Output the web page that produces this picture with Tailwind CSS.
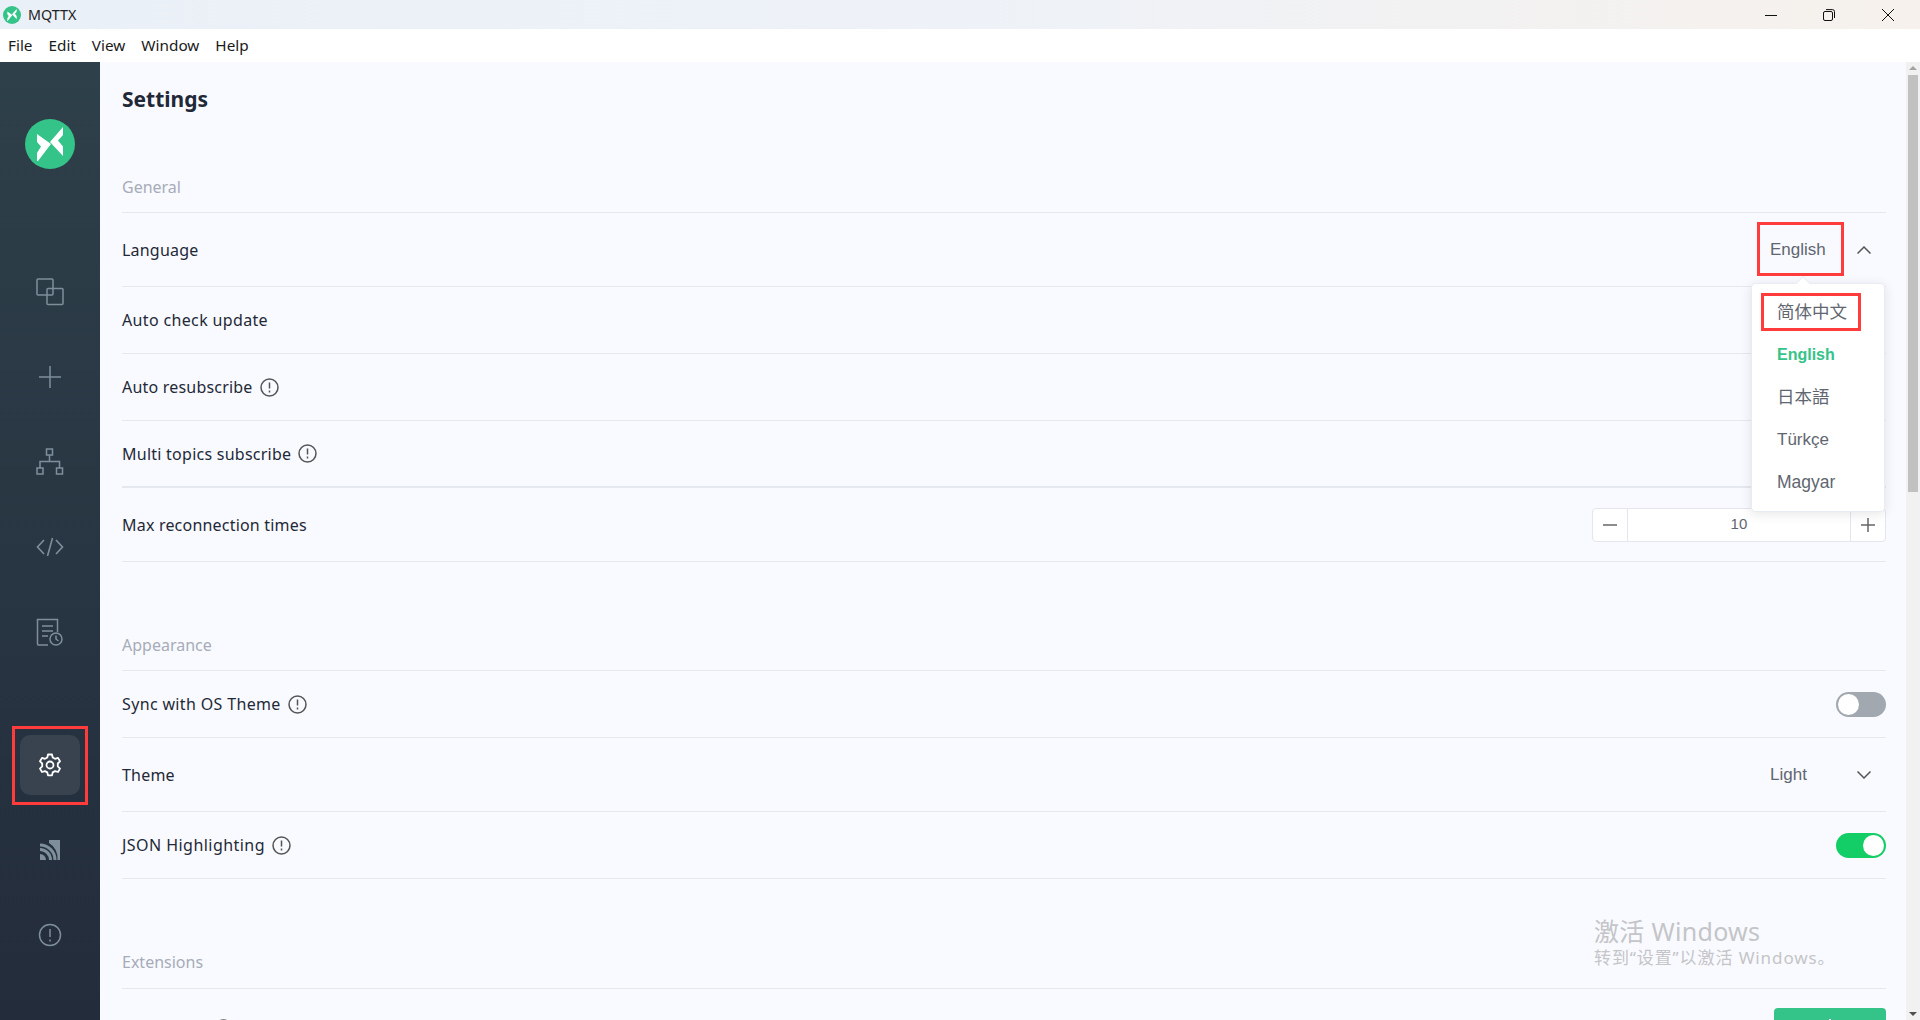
<!DOCTYPE html>
<html lang="en">
<head>
<meta charset="UTF-8" />
<title>MQTTX</title>
<script src="https://cdn.jsdelivr.net/npm/@tailwindcss/browser@4"></script>
</head>
<body class="relative h-[1020px] w-[1920px] overflow-hidden bg-[#f9faff] font-['Noto_Sans','Noto_Sans_CJK_SC',sans-serif] text-[#1f2937]">
  <!-- title bar -->
  <div class="flex h-[29px] items-center bg-gradient-to-r from-[#eaf0f7] via-[#eef2f8] to-[#f6f1ec]">
    <svg class="ml-[3px] h-[18px] w-[18px]" viewBox="0 0 50 50"><circle cx="25" cy="25" r="25" fill="#34c388"/><path d="M12 15L26 25 13 42H12V34L16 27.500 12 23zM38 8L25 23 38 37V27.500L33 21.500 38 16z" fill="#fff"/></svg>
    <span class="ml-[7px] text-[14.300px] text-[#222]">MQTTX</span>
    <div class="ml-auto flex items-center">
      <svg class="mr-[46px] h-[12px] w-[12px]" viewBox="0 0 12 12"><path d="M0 6.500h12" stroke="#111" fill="none"/></svg>
      <svg class="mr-[47px] h-[12px] w-[12px]" viewBox="0 0 12 12"><rect x=".5" y="2.500" width="9" height="9" rx="1.500" stroke="#111" fill="none"/><path d="M3 .6h6.500a2 2 0 0 1 2 2V9" stroke="#111" fill="none"/></svg>
      <svg class="mr-[26px] h-[12px] w-[12px]" viewBox="0 0 12 12"><path d="M0 0l12 12M12 0L0 12" stroke="#111" fill="none"/></svg>
    </div>
  </div>
  <!-- menu bar -->
  <div class="flex h-[33px] items-center gap-[16px] bg-white pl-[8px] text-[15.300px] text-[#1a1a1a]">
    <span>File</span><span>Edit</span><span>View</span><span>Window</span><span>Help</span>
  </div>

  <div class="flex h-[958px]">
    <!-- sidebar -->
    <aside class="flex w-[100px] shrink-0 flex-col items-center bg-gradient-to-b from-[#2e404a] to-[#232c3b] text-[#7f8f9a]">
      <svg class="mt-[57px] h-[50px] w-[50px]" viewBox="0 0 50 50"><circle cx="25" cy="25" r="25" fill="#34c388"/><path d="M12 15L26 25 13 42H12V34L16 27.500 12 23zM38 8L25 23 38 37V27.500L33 21.500 38 16z" fill="#fff"/></svg>
      <div class="mt-[93px] flex h-[60px] w-[60px] items-center justify-center">
        <svg class="h-[28px] w-[28px]" viewBox="0 0 28 28" fill="none" stroke="currentColor" stroke-width="1.500"><rect x="1" y="1" width="16" height="16" rx="1"/><rect x="11" y="10.500" width="16" height="16" rx="1"/></svg>
      </div>
      <div class="mt-[25px] flex h-[60px] w-[60px] items-center justify-center">
        <svg class="h-[24px] w-[24px]" viewBox="0 0 24 24" fill="none" stroke="currentColor" stroke-width="1.500"><path d="M1 12h22M12 1v22"/></svg>
      </div>
      <div class="mt-[25px] flex h-[60px] w-[60px] items-center justify-center">
        <svg class="h-[28px] w-[28px]" viewBox="0 0 28 28" fill="none" stroke="currentColor" stroke-width="1.500"><rect x="10.500" y="1" width="6" height="6"/><rect x="1" y="20" width="6" height="6"/><rect x="20.500" y="20" width="6" height="6"/><path d="M13.500 7v6.500M4 20v-6.500h19.500V20"/></svg>
      </div>
      <div class="mt-[25px] flex h-[60px] w-[60px] items-center justify-center">
        <svg class="h-[28px] w-[28px]" viewBox="0 0 28 28" fill="none" stroke="currentColor" stroke-width="1.600"><path d="M8 7l-6.500 7L8 21M20 7l6.500 7L20 21M16.500 5l-5 18"/></svg>
      </div>
      <div class="mt-[25px] flex h-[60px] w-[60px] items-center justify-center">
        <svg class="h-[28px] w-[28px]" viewBox="0 0 28 28" fill="none" stroke="currentColor" stroke-width="1.500"><path d="M12 27H2.500a1 1 0 0 1-1-1V1.500h20V14"/><path d="M6 8h11M6 13h11M6 18h6"/><circle cx="20" cy="21" r="6"/><path d="M20 17.500V21l2.500 2"/></svg>
      </div>
      <div class="mt-[73px] flex h-[60px] w-[60px] items-center justify-center rounded-[10px] bg-[#394350] text-white">
        <svg class="h-[24px] w-[24px]" viewBox="0 0 24 24" fill="none" stroke="currentColor" stroke-width="1.800" stroke-linejoin="round"><circle cx="12" cy="12" r="3.500"/><path d="M10 1.500h4l.7 3 2.300 1.300 3-.9 2 3.400-2.200 2.200v2.900l2.200 2.200-2 3.400-3-.9-2.300 1.300-.7 3h-4l-.7-3-2.300-1.300-3 .9-2-3.400 2.200-2.200v-2.900L2 8.300l2-3.400 3 .9 2.300-1.300z"/></svg>
      </div>
      <div class="mt-[25px] flex h-[60px] w-[60px] items-center justify-center">
        <svg class="h-[20px] w-[20px]" viewBox="0 0 20 20" fill="none" stroke="currentColor"><path d="M0 14a6 6 0 0 1 6 6H0z" fill="currentColor" stroke="none"/><path d="M0 9.500A10.500 10.500 0 0 1 10.500 20" stroke-width="3"/><path d="M0 5A15 15 0 0 1 15 20" stroke-width="3"/><path d="M9 0h11v20h-2.500A17.500 17.500 0 0 0 9 3z" fill="currentColor" stroke="none"/></svg>
      </div>
      <div class="mt-[25px] flex h-[60px] w-[60px] items-center justify-center">
        <svg class="h-[24px] w-[24px]" viewBox="0 0 24 24" fill="none" stroke="currentColor" stroke-width="1.500"><circle cx="12" cy="12" r="10.500"/><path d="M12 6v8M12 16.500v2"/></svg>
      </div>
    </aside>

    <!-- settings -->
    <main class="relative min-w-0 flex-1 overflow-hidden pl-[22px] pr-[20px]">
      <h1 class="mt-[22px] h-[30px] text-[21px] leading-[30px] font-bold text-[#1f2937]">Settings</h1>

      <h2 class="mt-[51px] flex h-[48px] items-center border-b border-[#e6e8f0] pb-[4px] text-[16px] text-[#a6acb8]">General</h2>
      <div class="flex h-[74px] items-center justify-between border-b border-[#e6e8f0] text-[16px] tracking-[0.2px]">
        <span>Language</span>
        <span class="flex w-[116px] items-center justify-between pr-[15px] font-['Liberation_Sans',sans-serif] text-[17px] tracking-normal text-[#5f6670]">English
          <svg class="h-[8px] w-[14px]" viewBox="0 0 14 8" fill="none" stroke="#555" stroke-width="1.500"><path d="M.5 7.500L7 1l6.500 6.500"/></svg>
        </span>
      </div>
      <div class="flex h-[67px] items-center border-b border-[#e6e8f0] text-[16px] tracking-[0.35px]">Auto check update</div>
      <div class="flex h-[67px] items-center gap-[7px] border-b border-[#e6e8f0] text-[16px] tracking-[0.2px]">Auto resubscribe
        <svg class="h-[19px] w-[19px]" viewBox="0 0 19 19" fill="none" stroke="#555" stroke-width="1.500"><circle cx="9.500" cy="9.500" r="8.500"/><path d="M9.500 4.500v6M9.500 12.500v2"/></svg>
      </div>
      <div class="flex h-[67px] items-center gap-[7px] border-b-2 border-[#e6e8f0] text-[16px] tracking-[0.25px]">Multi topics subscribe
        <svg class="h-[19px] w-[19px]" viewBox="0 0 19 19" fill="none" stroke="#555" stroke-width="1.500"><circle cx="9.500" cy="9.500" r="8.500"/><path d="M9.500 4.500v6M9.500 12.500v2"/></svg>
      </div>
      <div class="flex h-[74px] items-center justify-between border-b border-[#e6e8f0] text-[16px] tracking-[0.2px]">
        <span>Max reconnection times</span>
        <div class="flex h-[34px] w-[294px] items-center rounded-[4px] border border-[#e4e6ef] bg-white font-['Liberation_Sans',sans-serif] text-[15px] text-[#5f6670]">
          <span class="flex h-full w-[35px] items-center justify-center border-r border-[#e4e6ef]">
            <svg class="h-[14px] w-[14px]" viewBox="0 0 14 14" stroke="#666" stroke-width="1.500"><path d="M0 7h14"/></svg>
          </span>
          <span class="flex-1 text-center">10</span>
          <span class="flex h-full w-[35px] items-center justify-center border-l border-[#e4e6ef]">
            <svg class="h-[14px] w-[14px]" viewBox="0 0 14 14" stroke="#666" stroke-width="1.500"><path d="M0 7h14M7 0v14"/></svg>
          </span>
        </div>
      </div>

      <h2 class="mt-[61px] flex h-[48px] items-center border-b border-[#e6e8f0] pb-[4px] text-[16px] text-[#a6acb8]">Appearance</h2>
      <div class="flex h-[67px] items-center justify-between border-b border-[#e6e8f0] text-[16px] tracking-[0.35px]">
        <span class="flex items-center gap-[7px]">Sync with OS Theme
          <svg class="h-[19px] w-[19px]" viewBox="0 0 19 19" fill="none" stroke="#555" stroke-width="1.500"><circle cx="9.500" cy="9.500" r="8.500"/><path d="M9.500 4.500v6M9.500 12.500v2"/></svg>
        </span>
        <span class="flex h-[25px] w-[50px] items-center rounded-full bg-[#a1a8b0] px-[2px]"><span class="h-[21px] w-[21px] rounded-full bg-white"></span></span>
      </div>
      <div class="flex h-[74px] items-center justify-between border-b border-[#e6e8f0] text-[16px] tracking-[0.2px]">
        <span>Theme</span>
        <span class="flex w-[116px] items-center justify-between pr-[15px] font-['Liberation_Sans',sans-serif] text-[17px] tracking-normal text-[#5f6670]">Light
          <svg class="h-[8px] w-[14px]" viewBox="0 0 14 8" fill="none" stroke="#555" stroke-width="1.500"><path d="M.5.5L7 7l6.500-6.500"/></svg>
        </span>
      </div>
      <div class="flex h-[67px] items-center justify-between border-b border-[#e6e8f0] text-[16px] tracking-[0.45px]">
        <span class="flex items-center gap-[7px]">JSON Highlighting
          <svg class="h-[19px] w-[19px]" viewBox="0 0 19 19" fill="none" stroke="#555" stroke-width="1.500"><circle cx="9.500" cy="9.500" r="8.500"/><path d="M9.500 4.500v6M9.500 12.500v2"/></svg>
        </span>
        <span class="flex h-[25px] w-[50px] items-center justify-end rounded-full bg-[#13ce66] px-[2px]"><span class="h-[21px] w-[21px] rounded-full bg-white"></span></span>
      </div>

      <h2 class="mt-[61px] flex h-[49px] items-center border-b border-[#e6e8f0] pb-[4px] text-[16px] text-[#a6acb8]">Extensions</h2>
      <div class="flex h-[78px] items-center justify-between">
        <svg class="ml-[92px] h-[19px] w-[19px]" viewBox="0 0 19 19" fill="none" stroke="#555" stroke-width="1.500"><circle cx="9.500" cy="9.500" r="8.500"/></svg>
        <span class="flex h-[40px] w-[112px] items-center justify-center rounded-[4px] bg-[#34c388]">
          <svg class="h-[18px] w-[14px]" viewBox="0 0 14 18" fill="none" stroke="#fff" stroke-width="2"><path d="M7 0v14M2 9l5 5 5-5"/></svg>
        </span>
      </div>

      <!-- language dropdown -->
      <div class="absolute left-[1651px] top-[221px] w-[134px] rounded-[4px] border border-[#e9ebf2] bg-white py-[7px] font-['Liberation_Sans','Noto_Sans_CJK_SC',sans-serif] text-[17px] text-[#5f6670] shadow-[0_2px_12px_rgba(0,0,0,0.1)]">
        <div class="absolute left-[46px] top-[-6px] h-[10px] w-[10px] rotate-45 border-l border-t border-[#e9ebf2] bg-white"></div>
        <div class="flex h-[42.500px] items-center pl-[25px] text-[17.500px]">简体中文</div>
        <div class="flex h-[42.500px] items-center pl-[25px] text-[16px] font-bold text-[#34c388]">English</div>
        <div class="flex h-[42.500px] items-center pl-[25px] text-[17.500px]">日本語</div>
        <div class="flex h-[42.500px] items-center pl-[25px]">Türkçe</div>
        <div class="flex h-[42.500px] items-center pl-[25px] text-[17.500px]">Magyar</div>
      </div>
    </main>

    <!-- scrollbar -->
    <div class="flex w-[14px] shrink-0 flex-col items-center justify-between bg-[#f1f1f1] pt-[4px] pb-[4px]">
      <div class="flex flex-col items-center">
        <div class="h-0 w-0 border-x-[4px] border-b-[4px] border-x-transparent border-b-[#a3a3a3]"></div>
        <div class="mt-[5px] h-[417px] w-[10px] bg-[#c1c1c1]"></div>
      </div>
      <div class="h-0 w-0 border-x-[4px] border-t-[4px] border-x-transparent border-t-[#505050]"></div>
    </div>
  </div>

  <!-- annotation boxes drawn over the screenshot -->
  <div class="absolute left-[12px] top-[726px] h-[79px] w-[76px] border-[3px] border-[#ff3b3b]"></div>
  <div class="absolute left-[1757px] top-[222px] h-[54px] w-[87px] border-[3px] border-[#ff3b3b]"></div>
  <div class="absolute left-[1761px] top-[293px] h-[38px] w-[100px] border-[3px] border-[#ff3b3b]"></div>

  <!-- windows activation watermark -->
  <div class="absolute left-[1594px] top-[914px] font-['Noto_Sans','Noto_Sans_CJK_SC',sans-serif] text-[#c4c5c8]">
    <div class="text-[25px] leading-[34px] tracking-[0.3px]">激活 Windows</div>
    <div class="text-[17px] leading-[20px] tracking-[0.9px]">转到“设置”以激活 Windows。</div>
  </div>
</body>
</html>
